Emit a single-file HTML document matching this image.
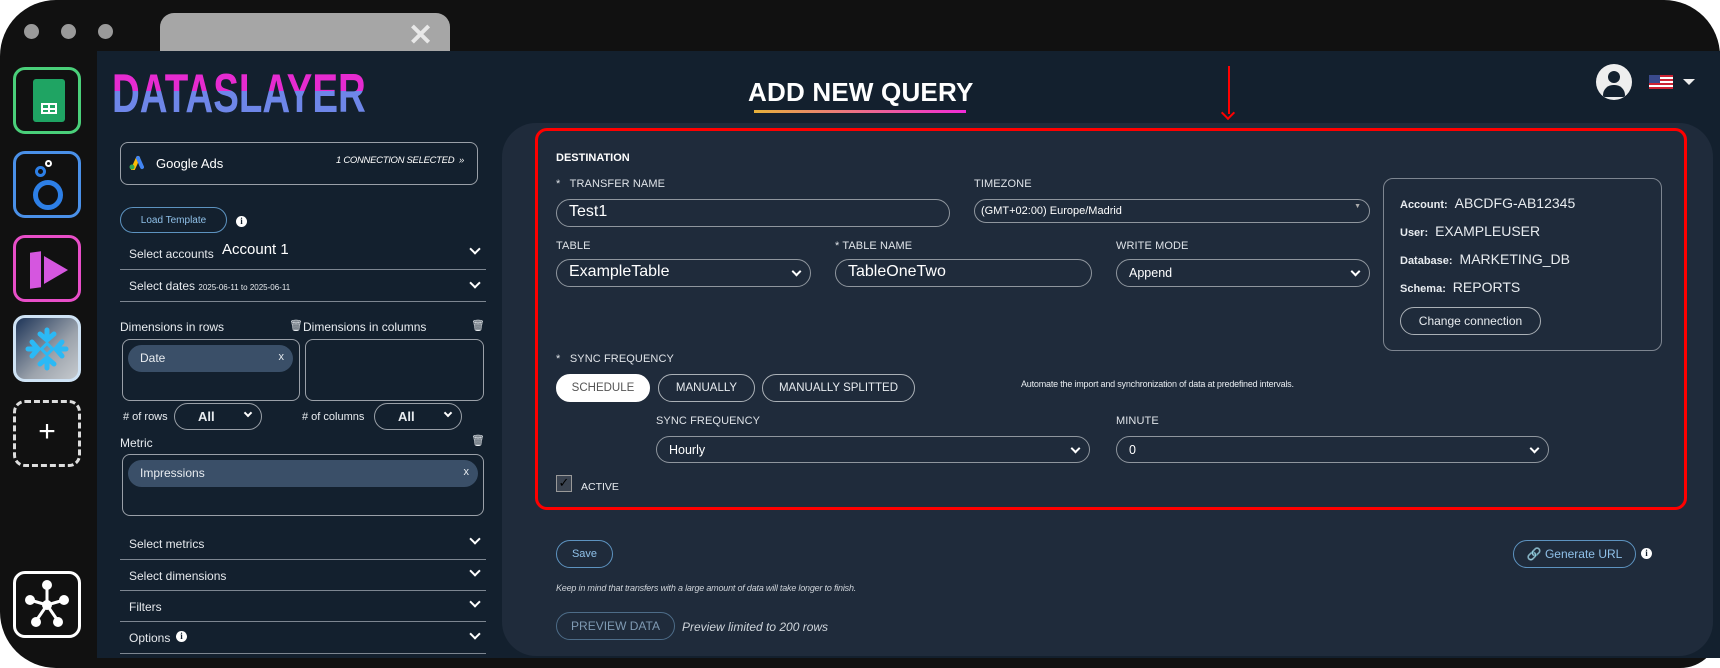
<!DOCTYPE html>
<html><head><meta charset="utf-8">
<style>
*{box-sizing:border-box;margin:0;padding:0}
body{width:1720px;height:668px;background:#fff;overflow:hidden;font-family:"Liberation Sans",sans-serif;color:#e8ecf0;position:relative}
.a{position:absolute}
.frame{left:0;top:0;width:1720px;height:668px;background:#111;border-radius:56px 56px 40px 56px}
.main{left:97px;top:51px;width:1623px;height:607px;background:#13202e}
.panel{left:502px;top:123px;width:1211px;height:533px;background:#1f2b3b;border-radius:34px}
.red{left:535px;top:128px;width:1152px;height:382px;border:3px solid #f00;border-radius:12px}
.ic{width:68px;height:67px;border-radius:12px;border:3px solid}
.inp{border:1.5px solid #8f969e;border-radius:16px;height:27px;font-size:16px;padding:3px 12px;color:#fff}
.lbl{font-size:11px;color:#dfe3e8;letter-spacing:.1px}
.chev{width:8px;height:8px;border-right:2px solid #fff;border-bottom:2px solid #fff;transform:rotate(45deg)}
.row{left:120px;width:366px;border-bottom:1.5px solid #7d8691;font-size:12px;color:#e6e9ed}
.btn{border:1.5px solid #aab0b6;border-radius:15px;font-size:11.5px;display:flex;align-items:center;justify-content:center;color:#e8ecf0}
.blue{border-color:#5d93c0;color:#8fc0e8}
.info{width:11px;height:11px;border-radius:50%;background:#fff;color:#13202e;font-size:9px;font-weight:bold;text-align:center;line-height:11px;font-family:"Liberation Serif",serif}
.sel::after{content:"";position:absolute;right:10px;top:8px;width:5px;height:5px;border-right:2px solid #fff;border-bottom:2px solid #fff;transform:rotate(45deg)}
</style></head><body>
<div class="a frame"></div>
<div class="a" style="left:24px;top:24px;width:15px;height:15px;border-radius:50%;background:#9a9a9a"></div>
<div class="a" style="left:61px;top:24px;width:15px;height:15px;border-radius:50%;background:#9a9a9a"></div>
<div class="a" style="left:98px;top:24px;width:15px;height:15px;border-radius:50%;background:#9a9a9a"></div>
<div class="a" style="left:160px;top:13px;width:290px;height:40px;background:#a6a6a6;border-radius:14px 14px 0 0"></div>
<div class="a" style="left:408px;top:18px;font-size:30px;color:#e8e8e8;font-weight:bold">✕</div>
<div class="a main"></div>

<!-- sidebar icons -->
<div class="a ic" style="left:13px;top:67px;border-color:#4ad07a"><div class="a" style="left:17px;top:9px;width:32px;height:43px;background:#1fa463;border-radius:3px"></div><div class="a" style="left:25px;top:33px;width:16px;height:11px;border:2px solid #fff;background:linear-gradient(#fff,#fff) 50% 0/2px 100% no-repeat,linear-gradient(#fff,#fff) 0 50%/100% 2px no-repeat"></div></div>
<div class="a ic" style="left:13px;top:151px;border-color:#4a90e8"><div class="a" style="left:17px;top:26px;width:30px;height:30px;border:5px solid #2d7fe6;border-radius:50%"></div><div class="a" style="left:19px;top:12px;width:11px;height:11px;border:3px solid #2d7fe6;border-radius:50%"></div><div class="a" style="left:29px;top:6px;width:7px;height:7px;border:2px solid #fff;border-radius:50%"></div></div>
<div class="a ic" style="left:13px;top:235px;border-color:#e84ec8"><div class="a" style="left:14px;top:14px;width:11px;height:36px;background:#d556df;transform:skewY(-8deg)"></div><div class="a" style="left:28px;top:18px;width:0;height:0;border-left:24px solid #d556df;border-top:14px solid transparent;border-bottom:14px solid transparent"></div></div>
<div class="a ic" style="left:13px;top:315px;border-color:#cfe3f5;background:linear-gradient(135deg,#1e3558,#9ca3ac 60%,#c6cace)">
<svg class="a" style="left:8px;top:8px" width="46" height="46" viewBox="0 0 46 46"><g stroke="#2bb9f5" stroke-width="5" stroke-linecap="round" fill="none"><path d="M23 4 V13 M16 8 L23 14 L30 8"/><path d="M23 42 V33 M16 38 L23 32 L30 38"/><path d="M4 23 H13 M8 16 L14 23 L8 30"/><path d="M42 23 H33 M38 16 L32 23 L38 30"/></g><rect x="19" y="19" width="8" height="8" transform="rotate(45 23 23)" fill="none" stroke="#2bb9f5" stroke-width="3"/></svg></div>
<div class="a ic" style="left:13px;top:400px;border:3px dashed #ddd;font-size:30px;color:#fff;text-align:center;line-height:58px">+</div>
<div class="a ic" style="left:13px;top:571px;border-color:#fff">
<svg width="62" height="61" viewBox="0 0 62 61" class="a" style="left:0;top:0"><g stroke="#fff" stroke-width="3"><line x1="31" y1="31" x2="31" y2="12"/><line x1="31" y1="31" x2="14" y2="26"/><line x1="31" y1="31" x2="48" y2="26"/><line x1="31" y1="31" x2="20" y2="47"/><line x1="31" y1="31" x2="42" y2="47"/></g><g fill="#fff"><circle cx="31" cy="31" r="5"/><circle cx="31" cy="11" r="5"/><circle cx="14" cy="26" r="5"/><circle cx="48" cy="26" r="5"/><circle cx="20" cy="48" r="5"/><circle cx="42" cy="48" r="5"/></g></svg></div>

<!-- logo -->
<div class="a" style="left:112px;top:66px;font-size:55px;line-height:55px;font-weight:900;font-family:'Liberation Sans',sans-serif;background:linear-gradient(180deg,#e62bd0 0,#e62bd0 45%,#6e86e8 45%,#6e86e8 100%);-webkit-background-clip:text;background-clip:text;color:transparent;transform:scaleX(0.7);transform-origin:left top">DATASLAYER</div>

<!-- title -->
<div class="a" style="left:748px;top:77px;font-size:26px;font-weight:bold;color:#fff;letter-spacing:.2px">ADD NEW QUERY</div>
<div class="a" style="left:754px;top:110px;width:212px;height:3px;background:linear-gradient(90deg,#e6b13a,#f02bd8)"></div>
<div class="a" style="left:1228px;top:66px;width:2px;height:48px;background:#f00"></div>
<div class="a" style="left:1223px;top:108px;width:10px;height:10px;border-right:2px solid #f00;border-bottom:2px solid #f00;transform:rotate(45deg)"></div>
<div class="a" style="left:1596px;top:64px;width:36px;height:36px;border-radius:50%;background:#eee;overflow:hidden"><div class="a" style="left:12px;top:7px;width:12px;height:12px;border-radius:50%;background:#13202e"></div><div class="a" style="left:7px;top:21px;width:22px;height:12px;border-radius:11px 11px 2px 2px;background:#13202e"></div></div>
<div class="a" style="left:1649px;top:75px;width:24px;height:14px;background:repeating-linear-gradient(#c23 0 2px,#fff 2px 4px)"><div class="a" style="left:0;top:0;width:11px;height:8px;background:#3a4a8c"></div></div>
<div class="a" style="left:1683px;top:79px;border-left:6px solid transparent;border-right:6px solid transparent;border-top:6px solid #eee"></div>

<!-- left column -->
<div class="a" style="left:120px;top:142px;width:358px;height:43px;border:1.5px solid #9aa0a8;border-radius:8px"></div>
<svg class="a" style="left:128px;top:155px" width="16" height="15" viewBox="0 0 16 15"><path d="M5 14 L10 3" stroke="#fbbc04" stroke-width="4" stroke-linecap="round"/><path d="M10 3 L14 12" stroke="#4285f4" stroke-width="4" stroke-linecap="round"/><circle cx="4" cy="12" r="2.5" fill="#34a853"/></svg>
<div class="a" style="left:156px;top:156px;font-size:13px;color:#fff">Google Ads</div>
<div class="a" style="left:336px;top:155px;font-size:9.5px;font-style:italic;color:#fff;letter-spacing:-.3px">1 CONNECTION SELECTED &nbsp;»</div>
<div class="a btn blue" style="left:120px;top:207px;width:107px;height:26px;font-size:10px;border-radius:13px">Load Template</div>
<div class="a info" style="left:236px;top:216px">i</div>
<div class="a row" style="top:235px;height:35px"><span class="a" style="left:9px;top:12px">Select accounts</span><span class="a" style="left:102px;top:6px;font-size:15px;color:#fff">Account 1</span><div class="a chev" style="left:351px;top:10px"></div></div>
<div class="a row" style="top:270px;height:32px"><span class="a" style="left:9px;top:9px">Select dates <span style="font-size:8px">2025-06-11 to 2025-06-11</span></span><div class="a chev" style="left:351px;top:9px"></div></div>
<div class="a" style="left:120px;top:320px;font-size:12px">Dimensions in rows</div>
<div class="a" style="left:289px;top:319px;font-size:11px">🗑</div>
<div class="a" style="left:303px;top:320px;font-size:12px">Dimensions in columns</div>
<div class="a" style="left:471px;top:319px;font-size:11px">🗑</div>
<div class="a" style="left:122px;top:339px;width:178px;height:62px;border:1.5px solid #9aa0a8;border-radius:8px"></div>
<div class="a" style="left:305px;top:339px;width:179px;height:62px;border:1.5px solid #9aa0a8;border-radius:8px"></div>
<div class="a" style="left:128px;top:345px;width:165px;height:27px;background:#3a4f68;border-radius:14px;font-size:12px;padding:6px 12px">Date<span class="a" style="right:9px;top:6px;font-size:11px">x</span></div>
<div class="a" style="left:123px;top:411px;font-size:11px">#  of rows</div>
<div class="a" style="left:174px;top:403px;width:88px;height:27px;border:1.5px solid #9aa0a8;border-radius:14px;font-size:13px;font-weight:bold;padding:5px 0 0 23px">All<div class="a chev" style="left:70px;top:6px;width:6px;height:6px"></div></div>
<div class="a" style="left:302px;top:411px;font-size:11px"># of columns</div>
<div class="a" style="left:374px;top:403px;width:88px;height:27px;border:1.5px solid #9aa0a8;border-radius:14px;font-size:13px;font-weight:bold;padding:5px 0 0 23px">All<div class="a chev" style="left:70px;top:6px;width:6px;height:6px"></div></div>
<div class="a" style="left:120px;top:436px;font-size:12px">Metric</div>
<div class="a" style="left:471px;top:434px;font-size:11px">🗑</div>
<div class="a" style="left:122px;top:454px;width:362px;height:62px;border:1.5px solid #9aa0a8;border-radius:8px"></div>
<div class="a" style="left:128px;top:460px;width:350px;height:27px;background:#3a4f68;border-radius:14px;font-size:12px;padding:6px 12px">Impressions<span class="a" style="right:9px;top:6px;font-size:11px">x</span></div>
<div class="a row" style="top:527px;height:33px"><span class="a" style="left:9px;top:10px">Select metrics</span><div class="a chev" style="left:351px;top:8px"></div></div>
<div class="a row" style="top:560px;height:31px"><span class="a" style="left:9px;top:9px">Select dimensions</span><div class="a chev" style="left:351px;top:7px"></div></div>
<div class="a row" style="top:591px;height:31px"><span class="a" style="left:9px;top:9px">Filters</span><div class="a chev" style="left:351px;top:7px"></div></div>
<div class="a row" style="top:622px;height:32px"><span class="a" style="left:9px;top:9px">Options</span><div class="a info" style="left:56px;top:9px">i</div><div class="a chev" style="left:351px;top:8px"></div></div>

<!-- main panel -->
<div class="a panel"></div>
<div class="a red"></div>
<div class="a" style="left:556px;top:152px;font-size:11px;font-weight:bold;color:#fff">DESTINATION</div>
<div class="a lbl" style="left:556px;top:178px">*&nbsp;&nbsp; TRANSFER NAME</div>
<div class="a inp" style="left:556px;top:199px;width:394px;height:28px">Test1</div>
<div class="a lbl" style="left:974px;top:178px">TIMEZONE</div>
<div class="a inp" style="left:974px;top:199px;width:396px;height:24px;font-size:11px;padding:5px 6px">(GMT+02:00) Europe/Madrid<span class="a" style="right:8px;top:3px;font-size:7px;color:#aaa">▼</span></div>
<div class="a lbl" style="left:556px;top:240px">TABLE</div>
<div class="a inp sel" style="left:556px;top:259px;width:255px;height:28px">ExampleTable</div>
<div class="a lbl" style="left:835px;top:240px">* TABLE NAME</div>
<div class="a inp" style="left:835px;top:259px;width:257px;height:28px">TableOneTwo</div>
<div class="a lbl" style="left:1116px;top:240px">WRITE MODE</div>
<div class="a inp sel" style="left:1116px;top:259px;width:254px;height:28px;font-size:12.5px;padding-top:6px">Append</div>
<div class="a" style="left:1383px;top:178px;width:279px;height:173px;border:1.5px solid #7d8590;border-radius:10px"></div>
<div class="a" style="left:1400px;top:195px;font-size:11px;font-weight:bold">Account: <span style="font-size:14px;font-weight:normal">&nbsp;ABCDFG-AB12345</span></div>
<div class="a" style="left:1400px;top:223px;font-size:11px;font-weight:bold">User: <span style="font-size:14px;font-weight:normal">&nbsp;EXAMPLEUSER</span></div>
<div class="a" style="left:1400px;top:251px;font-size:11px;font-weight:bold">Database: <span style="font-size:14px;font-weight:normal">&nbsp;MARKETING_DB</span></div>
<div class="a" style="left:1400px;top:279px;font-size:11px;font-weight:bold">Schema: <span style="font-size:14px;font-weight:normal">&nbsp;REPORTS</span></div>
<div class="a btn" style="left:1400px;top:307px;width:141px;height:28px;font-size:12px;border-radius:14px">Change connection</div>
<div class="a lbl" style="left:556px;top:353px">*&nbsp;&nbsp; SYNC FREQUENCY</div>
<div class="a btn" style="left:556px;top:374px;width:94px;height:28px;background:#fff;border-color:#fff;color:#555">SCHEDULE</div>
<div class="a btn" style="left:658px;top:374px;width:97px;height:28px">MANUALLY</div>
<div class="a btn" style="left:762px;top:374px;width:153px;height:28px">MANUALLY SPLITTED</div>
<div class="a" style="left:1021px;top:379px;font-size:9px;letter-spacing:-.2px">Automate the import and synchronization of data at predefined intervals.</div>
<div class="a lbl" style="left:656px;top:415px">SYNC FREQUENCY</div>
<div class="a inp sel" style="left:656px;top:436px;width:434px;height:27px;font-size:12.5px;padding-top:6px">Hourly</div>
<div class="a lbl" style="left:1116px;top:415px">MINUTE</div>
<div class="a inp sel" style="left:1116px;top:436px;width:433px;height:27px;font-size:12.5px;padding-top:6px">0</div>
<div class="a" style="left:556px;top:475px;width:16px;height:17px;border:1.5px solid #999;background:#3a4350;font-size:13px;line-height:14px;text-align:center;color:#000">✓</div>
<div class="a" style="left:581px;top:481px;font-size:10.5px">ACTIVE</div>
<div class="a btn blue" style="left:556px;top:540px;width:57px;height:28px;font-size:11px">Save</div>
<div class="a" style="left:556px;top:583px;font-size:9px;font-style:italic;color:#cdd2d8;letter-spacing:-.2px">Keep in mind that transfers with a large amount of data will take longer to finish.</div>
<div class="a btn" style="left:556px;top:612px;width:119px;height:28px;border-color:#4d6c88;color:#7f9ab3;font-size:12px">PREVIEW DATA</div>
<div class="a" style="left:682px;top:620px;font-size:12px;font-style:italic;color:#cfd5db">Preview limited to 200 rows</div>
<div class="a btn blue" style="left:1513px;top:540px;width:123px;height:28px;font-size:12px">🔗&nbsp;Generate URL</div>
<div class="a info" style="left:1641px;top:548px">i</div>
</body></html>
